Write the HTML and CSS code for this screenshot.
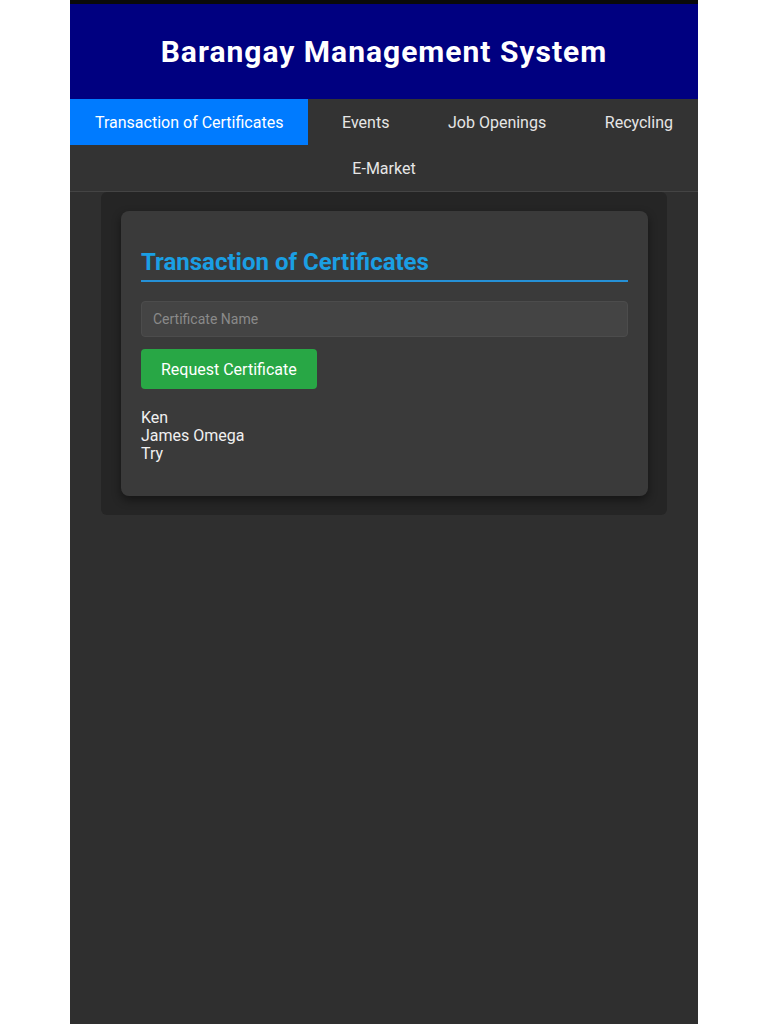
FILE: index.html
```html
<!DOCTYPE html>
<html lang="en">
<head>
<meta charset="utf-8">
<title>Barangay Management System</title>
<link rel="stylesheet" href="styles.css">
</head>
<body>
<div class="screen">
  <div class="topbar"></div>
  <header class="header">
    <h1 class="title">Barangay Management System</h1>
  </header>
  <nav class="nav">
    <a class="tab active">Transaction of Certificates</a>
    <a class="tab">Events</a>
    <a class="tab">Job Openings</a>
    <a class="tab">Recycling</a>
    <a class="tab tab-center">E-Market</a>
  </nav>
  <main class="container">
    <section class="card">
      <h2 class="card-title">Transaction of Certificates</h2>
      <div class="field">Certificate Name</div>
      <button class="btn">Request Certificate</button>
      <div class="list">
        <div class="item">Ken</div>
        <div class="item">James Omega</div>
        <div class="item">Try</div>
      </div>
    </section>
  </main>
</div>
</body>
</html>
```

FILE: styles.css
```css
* { box-sizing: border-box; }
html, body { margin: 0; padding: 0; background: #ffffff; }
body { font-family: Roboto, "Noto Sans", "Liberation Sans", sans-serif; }

.screen {
  width: 628px;
  margin: 0 auto;
  min-height: 1024px;
  background: #2f2f2f;
}

.topbar { height: 4px; background: #0a0a0a; }

.header {
  background: #000080;
  height: 95px;
  display: flex;
  align-items: center;
  justify-content: center;
}
.title {
  margin: 0;
  color: #ffffff;
  font-size: 30px;
  font-weight: 700;
  line-height: 34px;
  letter-spacing: 1px;
}

.nav {
  display: flex;
  flex-wrap: wrap;
  justify-content: space-between;
  background: #333333;
  border-bottom: 1px solid #444444;
}
.tab {
  display: block;
  padding: 15px 25px 13px;
  line-height: 18px;
  font-size: 16px;
  color: #e6e6e6;
  text-decoration: none;
}
.tab.active { background: #007bff; color: #ffffff; }
.tab-center { margin: 0 auto; }

.container {
  width: 566px;
  margin: 0 auto;
  padding: 19px 19px 19px 20px;
  background: #252525;
  border-radius: 6px;
}

.card {
  background: #3a3a3a;
  border-radius: 8px;
  padding: 20px;
  box-shadow: 0 4px 10px rgba(0, 0, 0, 0.45);
}

.card-title {
  margin: 17px 0 19px;
  padding-bottom: 4px;
  font-size: 24px;
  font-weight: 700;
  line-height: 28px;
  color: #1a9fe4;
  border-bottom: 2px solid #2590d6;
}

.field {
  height: 36px;
  padding: 0 11px;
  display: flex;
  align-items: center;
  background: #444444;
  border: 1px solid #4c4c4c;
  border-radius: 4px;
  color: #8a8a8a;
  font-size: 14px;
}

.btn {
  display: block;
  margin-top: 12px;
  height: 40px;
  padding: 0 20px;
  border: none;
  border-radius: 4px;
  background: #28a745;
  color: #ffffff;
  font-family: inherit;
  font-size: 16px;
}

.list {
  margin-top: 20px;
  margin-bottom: 13px;
  color: #f0f0f0;
  font-size: 16px;
  line-height: 18px;
}
```
